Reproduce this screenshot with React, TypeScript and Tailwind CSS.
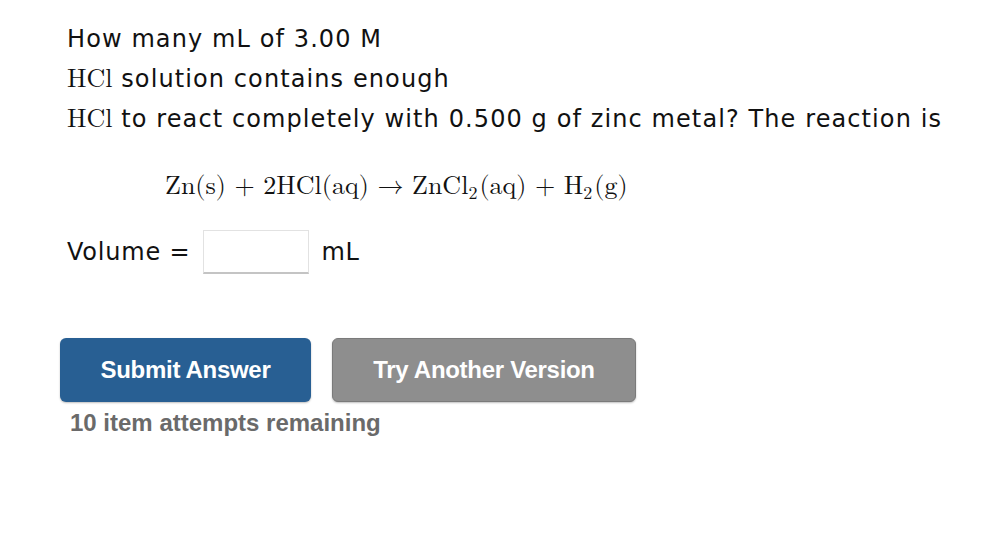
export default function App() {
  const serif = "font-['Latin_Modern_Math','DejaVu_Serif',serif]";
  return (
    <div className="w-[1006px] h-[550px] bg-white font-['DejaVu_Sans',Verdana,sans-serif] text-[#111]">
      <div className="pl-[67px] pt-[19px]">
        <div className="text-[24px] leading-[40px] tracking-[1.1px]">
          <p>How many mL of 3.00 M</p>
          <p>
            <span className={`${serif} text-[26px] tracking-normal`}>HCl</span> solution contains enough
          </p>
          <p>
            <span className={`${serif} text-[26px] tracking-normal`}>HCl</span> to react completely with 0.500 g of zinc metal? The reaction is
          </p>
        </div>
        <p className={`${serif} text-[26px] leading-[40px] mt-[27px] pl-[98px]`}>
          Zn(s) + 2HCl(aq) → ZnCl<sub className="text-[18px] mr-[2px]">2</sub>(aq) + H<sub className="text-[18px] mr-[2px]">2</sub>(g)
        </p>
        <div className="flex items-center mt-[24px] text-[24px] tracking-[0.8px]">
          <span>Volume =</span>
          <input
            type="text"
            className="ml-[13px] w-[106px] h-[44px] border border-[#e2e2e2] border-b-[#c4c4c4] border-b-2 outline-none"
          />
          <span className="ml-[12px]">mL</span>
        </div>
      </div>
      <div className="pl-[60px] mt-[64px] flex gap-[21px] font-['Liberation_Sans',Arial,sans-serif] font-bold text-[24px] tracking-[-0.3px] text-white">
        <button className="w-[251px] h-[64px] rounded-[6px] bg-[#285f93] shadow-[0_1px_2px_rgba(0,0,0,0.25)]">
          Submit Answer
        </button>
        <button className="w-[304px] h-[64px] rounded-[6px] bg-[#8e8e8e] border border-[#7a7a7a] shadow-[0_1px_2px_rgba(0,0,0,0.25)]">
          Try Another Version
        </button>
      </div>
      <p className="pl-[70px] mt-[3px] font-['Liberation_Sans',Arial,sans-serif] font-bold text-[24px] tracking-[0px] text-[#6a6a6a]">
        10 item attempts remaining
      </p>
    </div>
  );
}
